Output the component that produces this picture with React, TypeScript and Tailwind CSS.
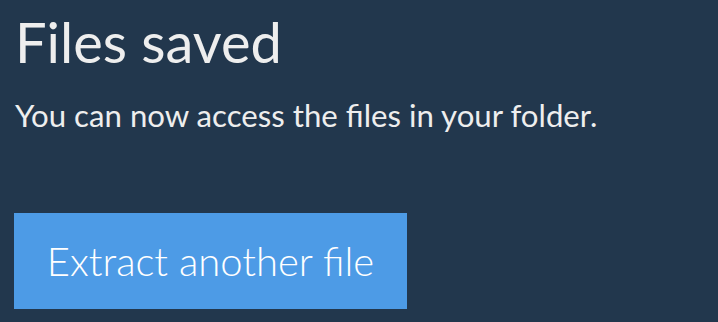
export default function App() {
  return (
    <div className="min-h-[322px] w-full bg-[#22374d] px-[14px] pt-[8px] font-['Lato',sans-serif] text-[#eeeeee]">
      <h1 className="pl-[1px] text-[56px] leading-[67px] font-normal">Files saved</h1>
      <p className="mt-[22px] pl-[1px] text-[31.2px] leading-[37px]">You can now access the files in your folder.</p>
      <button className="mt-[79px] flex h-[96px] w-[393px] items-center justify-center bg-[#4d9be6] text-[40px] font-light text-white">
        Extract another file
      </button>
    </div>
  );
}
